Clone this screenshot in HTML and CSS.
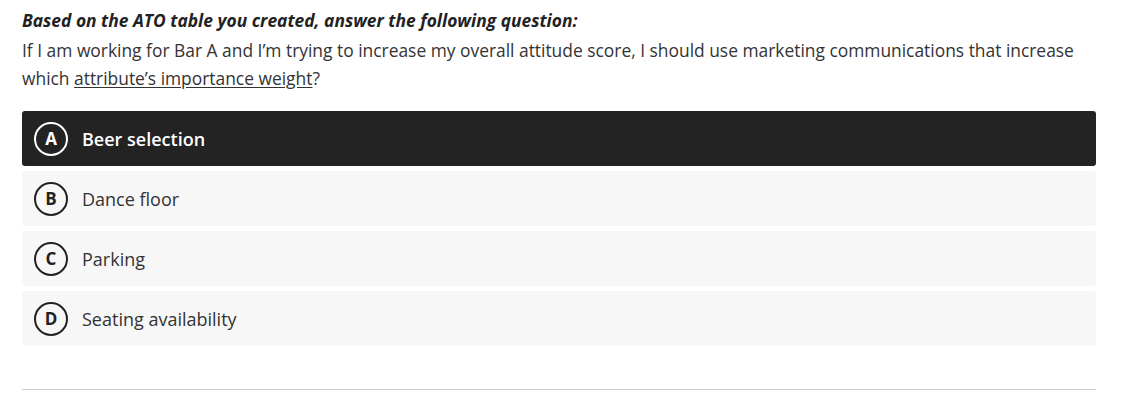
FILE: index.html
```html
<!DOCTYPE html>
<html lang="en">
<head>
<meta charset="utf-8">
<title>Question</title>
<link rel="stylesheet" href="styles.css">
</head>
<body>
<div class="question">
  <p class="prompt">Based on the ATO table you created, answer the following question:</p>
  <p class="stem">If I am working for Bar A and I’m trying to increase my overall attitude score, I should use marketing communications that increase which <u>attribute’s importance weight</u>?</p>
  <ul class="options">
    <li class="option selected"><span class="letter">A</span><span class="label">Beer selection</span></li>
    <li class="option"><span class="letter">B</span><span class="label">Dance floor</span></li>
    <li class="option"><span class="letter">C</span><span class="label">Parking</span></li>
    <li class="option"><span class="letter">D</span><span class="label">Seating availability</span></li>
  </ul>
  <hr class="rule">
</div>
</body>
</html>
```
FILE: styles.css
```css
html, body {
  margin: 0;
  padding: 0;
  background: #fff;
}
body {
  font-family: "Open Sans", "Liberation Sans", sans-serif;
  color: #333;
}
.question {
  width: 1074px;
  padding: 8px 0 0 22px;
}
.prompt {
  margin: 0;
  font-size: 17.4px;
  font-weight: 700;
  font-style: italic;
  color: #222;
  line-height: 24px;
}
.stem {
  margin: 4px 0 0 0;
  font-size: 17.4px;
  line-height: 28px;
  color: #333;
}
.stem u {
  text-underline-offset: 2px;
}
.options {
  list-style: none;
  margin: 19px 0 0 0;
  padding: 0;
  display: flex;
  flex-direction: column;
  gap: 5px;
}
.option {
  height: 55px;
  background: #f7f7f7;
  border-radius: 3px;
  display: flex;
  align-items: center;
  padding-left: 12px;
  gap: 14px;
  color: #333;
  font-size: 18px;
}
.option.selected {
  background: #232323;
  color: #fff;
  font-weight: 600;
}
.letter {
  width: 34px;
  height: 34px;
  box-sizing: border-box;
  border: 2px solid #222;
  border-radius: 50%;
  display: flex;
  align-items: center;
  justify-content: center;
  font-weight: 700;
  font-size: 17px;
  color: #222;
}
.selected .letter {
  border-color: #fff;
  color: #fff;
}
.rule {
  margin: 43px 0 0 0;
  border: 0;
  border-top: 1px solid #ccc;
  height: 0;
}
```
